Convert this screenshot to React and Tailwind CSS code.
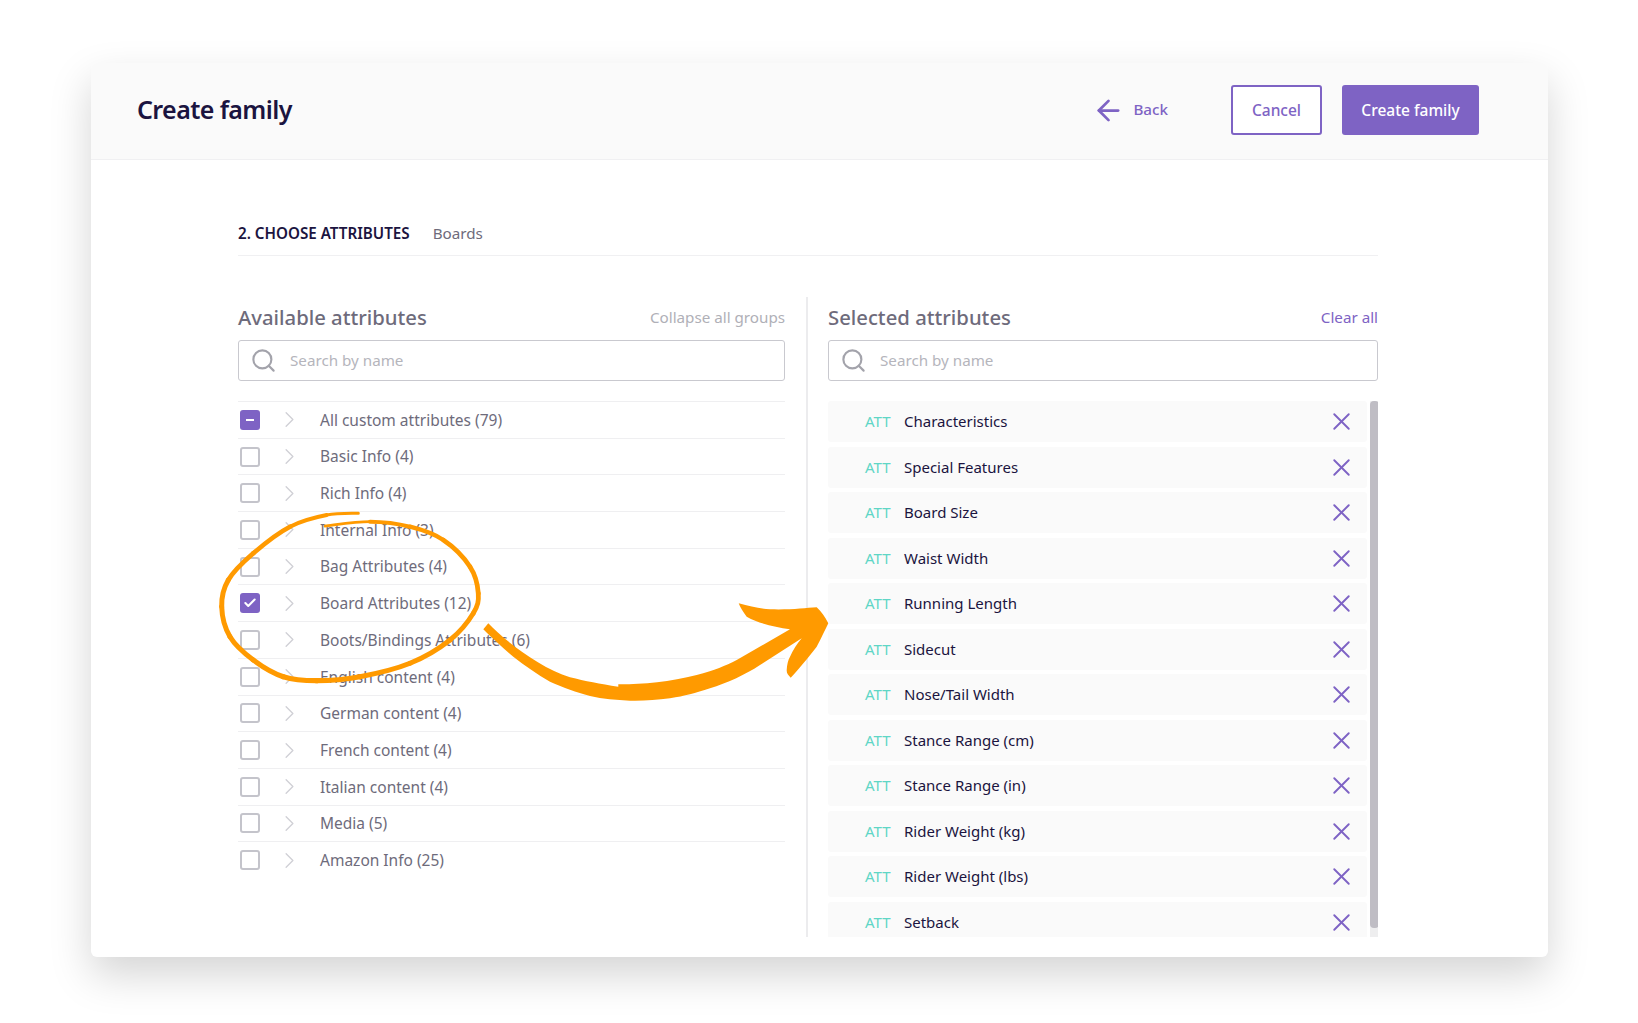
import React from "react";
import { Search, ArrowLeft, ChevronRight, X, Check } from "lucide-react";

const groups = [
  ["All custom attributes (79)", "some"],
  ["Basic Info (4)"],
  ["Rich Info (4)"],
  ["Internal Info (3)"],
  ["Bag Attributes (4)"],
  ["Board Attributes (12)", "all"],
  ["Boots/Bindings Attributes (6)"],
  ["English content (4)"],
  ["German content (4)"],
  ["French content (4)"],
  ["Italian content (4)"],
  ["Media (5)"],
  ["Amazon Info (25)"],
];

const selected = [
  "Characteristics",
  "Special Features",
  "Board Size",
  "Waist Width",
  "Running Length",
  "Sidecut",
  "Nose/Tail Width",
  "Stance Range (cm)",
  "Stance Range (in)",
  "Rider Weight (kg)",
  "Rider Weight (lbs)",
  "Setback",
];

const circle = [
  [358.3, 513.3], [326.7, 515], [290, 526.7], [253.3, 553.3], [228.3, 580], [221.7, 606.7], [230, 636.7],
  [253.3, 660], [283.3, 676.7], [316.7, 680.7], [360, 676.7], [410, 663.3], [450, 640], [473.3, 613.3],
  [478.3, 593.3], [470, 566.7], [443.3, 540], [410, 526.7], [370, 521.7], [325, 526],
];
const widths = [3, 4, 4.6, 4.8, 5, 5, 5, 5.2, 5.2, 5.2, 5, 4.8, 4.8, 4.8, 4.8, 4.6, 4.4, 4, 2.8];

function segment(i) {
  const p = (k) => circle[Math.max(0, Math.min(circle.length - 1, k))];
  const [a, b, c, d] = [p(i - 1), p(i), p(i + 1), p(i + 2)];
  const c1 = [b[0] + (c[0] - a[0]) / 6, b[1] + (c[1] - a[1]) / 6];
  const c2 = [c[0] - (d[0] - b[0]) / 6, c[1] - (d[1] - b[1]) / 6];
  return `M${b[0]} ${b[1]} C${c1[0]} ${c1[1]} ${c2[0]} ${c2[1]} ${c[0]} ${c[1]}`;
}

function SearchBox() {
  return (
    <div className="flex h-[41px] items-center rounded-[3px] border border-[#c9c9cf] bg-white pl-[11px]">
      <Search size={27} strokeWidth={1.9} className="shrink-0 text-[#a3a3ab]" />
      <span className="pl-[13px] text-[15.2px] text-[#b5b5bc]">Search by name</span>
    </div>
  );
}

function Box({ state }) {
  if (state === "some") {
    return (
      <span className="flex h-[20px] w-[20px] items-center justify-center rounded-[3px] bg-[#7e63c4]">
        <span className="h-[2px] w-[8px] bg-white" />
      </span>
    );
  }
  if (state === "all") {
    return (
      <span className="flex h-[20px] w-[20px] items-center justify-center rounded-[3px] bg-[#7e63c4]">
        <Check size={14} strokeWidth={3.5} className="text-white" />
      </span>
    );
  }
  return <span className="block h-[20px] w-[20px] rounded-[3px] border-2 border-[#c4c4cb] bg-white" />;
}

export default function App() {
  return (
    <div className="relative h-[1023px] w-[1638px] overflow-hidden bg-white pl-[91px] pt-[63px] font-['Noto_Sans',sans-serif]">
      <div className="h-[894px] w-[1457px] rounded-[6px] bg-white shadow-[0_18px_42px_rgba(0,0,0,0.17)]">
        <header className="flex h-[97px] items-center rounded-t-[6px] border-b border-[#f0f0f2] bg-[#fafafa] pb-[2px] pl-[46px] pr-[69px]">
          <h1 className="text-[25px] font-semibold tracking-[-0.6px] text-[#1b1440]">Create family</h1>
          <div className="ml-auto flex items-center text-[#7e63c4]">
            <ArrowLeft size={33} strokeWidth={2} />
            <span className="ml-[8px] mr-[63px] pb-[1px] text-[15.2px] font-medium">Back</span>
            <button className="h-[50px] w-[91px] rounded-[3px] border-2 border-[#7e63c4] bg-white pt-[1px] text-[15.5px] font-medium">
              Cancel
            </button>
            <button className="ml-[20px] h-[50px] w-[137px] rounded-[3px] bg-[#7e63c4] pt-[1px] text-[15.5px] font-medium text-white">
              Create family
            </button>
          </div>
        </header>

        <div className="pl-[147px] pr-[170px] pt-[58px]">
          <div className="flex h-[38px] items-start border-b border-[#f0f0f2]">
            <span className="text-[15.2px] font-semibold leading-[30px] text-[#1b1440]">2. CHOOSE ATTRIBUTES</span>
            <span className="ml-[23px] text-[15.2px] leading-[30px] text-[#6e6b7b]">Boards</span>
          </div>

          <div className="mt-[41px] flex h-[640px]">
            <section className="w-[547px]">
              <div className="flex h-[43px] items-center justify-between pb-[2px]">
                <h2 className="text-[20.3px] font-medium text-[#6e6b7b]">Available attributes</h2>
                <span className="text-[15.2px] text-[#b0b0b7]">Collapse all groups</span>
              </div>
              <SearchBox />
              <ul className="mt-[20px]">
                {groups.map(([name, state]) => (
                  <li key={name} className="flex h-[36.7px] items-center border-t border-[#efeff1] pl-[2px]">
                    <Box state={state} />
                    <ChevronRight size={27} strokeWidth={1.2} className="ml-[16px] text-[#d0d0d6]" />
                    <span className="ml-[17px] pt-[1px] text-[15.5px] text-[#6e6b7b]">{name}</span>
                  </li>
                ))}
              </ul>
            </section>

            <section className="ml-[21px] w-[572px] border-l-2 border-[#ececee] pl-[20px]">
              <div className="flex h-[43px] items-center justify-between pb-[2px]">
                <h2 className="text-[20.3px] font-medium text-[#6e6b7b]">Selected attributes</h2>
                <span className="text-[15.2px] text-[#7e63c4]">Clear all</span>
              </div>
              <SearchBox />
              <div className="mt-[20px] flex h-[536px] gap-[3px] overflow-hidden">
                <ul className="flex w-[539px] shrink-0 flex-col gap-[4.5px]">
                  {selected.map((name) => (
                    <li key={name} className="flex h-[41px] shrink-0 items-center rounded-[3px] bg-[#fafafa] pl-[37px] pr-[11px]">
                      <span className="w-[39px] text-[15px] text-[#5fd6c6]">ATT</span>
                      <span className="text-[15px] text-[#1b1440]">{name}</span>
                      <X size={29} strokeWidth={1.6} className="ml-auto text-[#7e63c4]" />
                    </li>
                  ))}
                </ul>
                <div className="h-full w-[9px] shrink-0 bg-[#eeeeef]">
                  <div className="h-[527px] rounded-[4px] bg-[#bfbdc4]" />
                </div>
              </div>
            </section>
          </div>
        </div>
      </div>

      <svg className="pointer-events-none absolute left-0 top-0" width="1638" height="1023" viewBox="0 0 1638 1023" fill="none">
        {widths.map((w, i) => (
          <path key={i} d={segment(i)} stroke="#ff9a00" strokeWidth={w} strokeLinecap="round" />
        ))}
        <path
          d="M488.3 623.3 C503 639 540 668 570 677.3 C585 681 600 684 618.3 686.7 L618.3 684.3 C640 684.5 670 682 696.7 675 C715 670 725 666 736.7 660 L790 629.3 C775 627 760 624 746.7 616.7 C743 612 740 607 738.7 603.3 C750 606 760 609 770 609.3 C790 610 805 608 816.7 607.3 C821 611 825 617 828.3 623.3 C825 630 820 641 816.7 646.7 C808 658 798 670 790.7 677.7 C788 675 786.5 673 786.7 670 C787 665 788 660 790 656.7 C793 650 797 644 801.7 638.3 L760 665 C745 675 727 683 710 688.3 C695 693 685 696 670 698.3 C656 700 644 701 630 700.7 C616 700 603 699 590 696 C576 692 564 688 550 681.7 C537 674 525 666 513.3 656.7 C503 648 493 639 483.3 629.3 Z"
          fill="#ff9a00"
        />
      </svg>
    </div>
  );
}
